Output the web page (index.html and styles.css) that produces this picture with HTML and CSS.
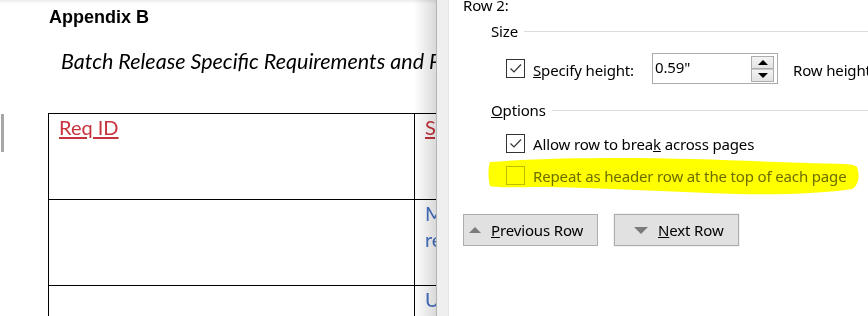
FILE: index.html
```html
<!DOCTYPE html>
<html lang="en">
<head>
    <meta charset="UTF-8">
    <meta name="viewport" content="width=device-width, initial-scale=1.0">
    <title>Table Properties - Row</title>
    <link rel="stylesheet" href="styles.css">
</head>
<body>
    <div class="screen">
        <div class="doc">
            <span class="change-bar"></span>
            <h1 class="appendix-title">Appendix B</h1>
            <p class="appendix-subtitle">Batch Release Specific Requirements and Procedures</p>
            <table class="req-table">
                <colgroup>
                    <col class="col-id">
                    <col class="col-spec">
                </colgroup>
                <tr>
                    <td><span class="head">Req ID</span></td>
                    <td><span class="head">Specific Requirement</span></td>
                </tr>
                <tr>
                    <td></td>
                    <td><span class="item">Master batch<br>record reviewed and approved</span></td>
                </tr>
                <tr>
                    <td></td>
                    <td><span class="item">Use of approved materials</span></td>
                </tr>
            </table>
        </div>

        <div class="dialog-frame"></div>

        <div class="dialog">
            <div class="row-label">Row 2:</div>

            <div class="group-head">
                <span>Size</span>
                <i class="rule"></i>
            </div>
            <div class="size-row">
                <span class="check checked">
                    <svg viewBox="0 0 17 17" width="17" height="17"><path d="M3.5 8.5 L7 12 L14 4.5" fill="none" stroke="#333" stroke-width="1.2"/></svg>
                </span>
                <span class="size-label"><u>S</u>pecify height:</span>
                <div class="spin-input">
                    <span class="spin-value">0.59"</span>
                    <span class="spin-buttons">
                        <span class="spin-btn"><i class="arrow-up"></i></span>
                        <span class="spin-btn"><i class="arrow-down"></i></span>
                    </span>
                </div>
                <span class="size-mode">Row height is:</span>
            </div>

            <div class="group-head options">
                <span><u>O</u>ptions</span>
                <i class="rule"></i>
            </div>
            <div class="option-row">
                <span class="check checked">
                    <svg viewBox="0 0 17 17" width="17" height="17"><path d="M3.5 8.5 L7 12 L14 4.5" fill="none" stroke="#333" stroke-width="1.2"/></svg>
                </span>
                <span class="option-text">Allow row to brea<u>k</u> across pages</span>
            </div>
            <div class="option-row disabled">
                <span class="check"></span>
                <span class="option-text">Repeat as header row at the top of each page</span>
            </div>

            <div class="nav-buttons">
                <button class="nav-btn prev"><i class="tri-up"></i><span><u>P</u>revious Row</span></button>
                <button class="nav-btn next"><i class="tri-down"></i><span><u>N</u>ext Row</span></button>
            </div>

            <svg class="highlight" viewBox="0 0 372 42" width="372" height="42">
                <path d="M3 7 C40 4 90 3 130 3 C200 3 260 6 320 8 C350 9 366 8 370 12 C373 20 372 30 365 34 C340 38 300 40 250 39 C190 37 120 33 60 32 C30 32 8 33 3 31 C1 24 1 12 3 7 Z" fill="#ffff00"/>
            </svg>
        </div>
    </div>
</body>
</html>
```

FILE: styles.css
```css
html, body {
    margin: 0;
}

body {
    width: 868px;
    height: 316px;
    overflow: hidden;
    background-color: #fff;
}

.screen {
    display: flex;
    height: 316px;
}

/* document page */
.doc {
    position: relative;
    flex: none;
    width: 436px;
    height: 316px;
    padding-left: 48px;
    box-sizing: border-box;
    overflow: hidden;
    background-color: #fff;
}

.doc::before {
    content: '';
    position: absolute;
    top: 0;
    left: 0;
    right: 0;
    height: 4px;
    background: linear-gradient(rgba(0, 0, 0, 0.08), rgba(0, 0, 0, 0));
}

.doc::after {
    content: '';
    position: absolute;
    top: 0;
    right: 0;
    width: 22px;
    height: 100%;
    background: linear-gradient(to right, rgba(0, 0, 0, 0), rgba(0, 0, 0, 0.15));
}

.change-bar {
    position: absolute;
    left: 1px;
    top: 114px;
    width: 3px;
    height: 38px;
    background-color: #a6a6a6;
}

.appendix-title {
    margin: 7px 0 0 1px;
    font-family: "Liberation Sans", Arial, sans-serif;
    font-size: 18px;
    line-height: 21px;
    font-weight: bold;
    color: #000;
}

.appendix-subtitle {
    margin: 20px 0 0 13px;
    font-family: Lato, sans-serif;
    font-style: italic;
    font-size: 21.5px;
    line-height: 26px;
    white-space: nowrap;
    color: #000;
}

.req-table {
    margin-top: 39px;
    border-collapse: collapse;
    table-layout: fixed;
    width: 666px;
    font-family: Lato, sans-serif;
    font-size: 20px;
    line-height: 26px;
}

.req-table .col-id {
    width: 366px;
}

.req-table .col-spec {
    width: 300px;
}

.req-table tr {
    height: 86px;
}

.req-table td {
    border: 1px solid #000;
    padding: 0 10px;
    vertical-align: top;
}

.req-table .head {
    color: #c8323c;
    text-decoration: underline;
    text-underline-offset: 2px;
}

.req-table .item {
    color: #4472c4;
}

/* dialog */
.dialog-frame {
    flex: none;
    width: 13px;
    height: 316px;
    box-sizing: border-box;
    background-color: #efefef;
    border-left: 1px solid #b4b4b4;
    border-right: 1px solid #e4e4e4;
}

.dialog {
    position: relative;
    flex: none;
    width: 460px;
    height: 316px;
    padding-left: 14px;
    box-sizing: border-box;
    background-color: #fff;
    font-family: "Noto Sans", sans-serif;
    font-size: 15px;
    letter-spacing: -0.15px;
    line-height: 20px;
    color: #000;
    white-space: nowrap;
}

.row-label {
    margin-top: -5px;
}

.group-head {
    display: flex;
    align-items: center;
    height: 20px;
    margin-top: 6px;
    padding-left: 28px;
}

.group-head .rule {
    flex: 1;
    height: 1px;
    margin-left: 6px;
    background-color: #dcdcdc;
}

.group-head.options {
    margin-top: 16px;
}

.check {
    display: inline-flex;
    align-items: center;
    justify-content: center;
    flex: none;
    width: 19px;
    height: 19px;
    box-sizing: border-box;
    border: 1px solid #333;
    background-color: #fff;
}

.size-row {
    display: flex;
    align-items: center;
    height: 31px;
    margin-top: 12px;
    padding-left: 43px;
}

.size-label {
    width: 119px;
    margin-left: 8px;
    padding-top: 3px;
}

.spin-input {
    display: flex;
    width: 126px;
    height: 31px;
    box-sizing: border-box;
    border: 1px solid #ababab;
}

.spin-value {
    flex: 1;
    padding: 3px 0 0 2px;
}

.spin-buttons {
    display: flex;
    flex-direction: column;
    margin: 2px 3px 0 0;
}

.spin-btn {
    display: flex;
    align-items: center;
    justify-content: center;
    width: 23px;
    height: 13px;
    box-sizing: border-box;
    border: 1px solid #adadad;
    background: linear-gradient(#f3f3f3, #e3e3e3);
}

.spin-btn + .spin-btn {
    border-top-color: #c8c8c8;
}

.arrow-up {
    border-left: 5px solid transparent;
    border-right: 5px solid transparent;
    border-bottom: 5px solid #000;
}

.arrow-down {
    border-left: 5px solid transparent;
    border-right: 5px solid transparent;
    border-top: 5px solid #000;
}

.size-mode {
    margin-left: 15px;
    padding-top: 3px;
}

.option-row {
    display: flex;
    align-items: center;
    height: 20px;
    margin-top: 13px;
    padding-left: 43px;
}

.option-row + .option-row {
    margin-top: 12px;
}

.option-text {
    margin-left: 8px;
    padding-top: 2px;
}

.option-row.disabled {
    color: #6d6d6d;
}

.option-row.disabled .check {
    border-color: #bcbcbc;
}

.nav-buttons {
    display: flex;
    gap: 16px;
    margin-top: 29px;
}

.nav-btn {
    display: flex;
    align-items: center;
    gap: 10px;
    height: 32px;
    padding: 0;
    box-sizing: border-box;
    border: 1px solid #adadad;
    background-color: #e1e1e1;
    font: inherit;
    letter-spacing: inherit;
    color: #000;
}

.nav-btn.prev {
    width: 135px;
    padding-left: 5px;
}

.nav-btn.next {
    width: 125px;
    padding-left: 19px;
    box-shadow: 0 0 0 1px #f2f2f2;
}

.tri-up {
    border-left: 6px solid transparent;
    border-right: 6px solid transparent;
    border-bottom: 6px solid #7a7a7a;
}

.tri-down {
    border-left: 7px solid transparent;
    border-right: 7px solid transparent;
    border-top: 7px solid #7a7a7a;
}

.highlight {
    position: absolute;
    left: 38px;
    top: 155px;
    mix-blend-mode: multiply;
    pointer-events: none;
}
```
